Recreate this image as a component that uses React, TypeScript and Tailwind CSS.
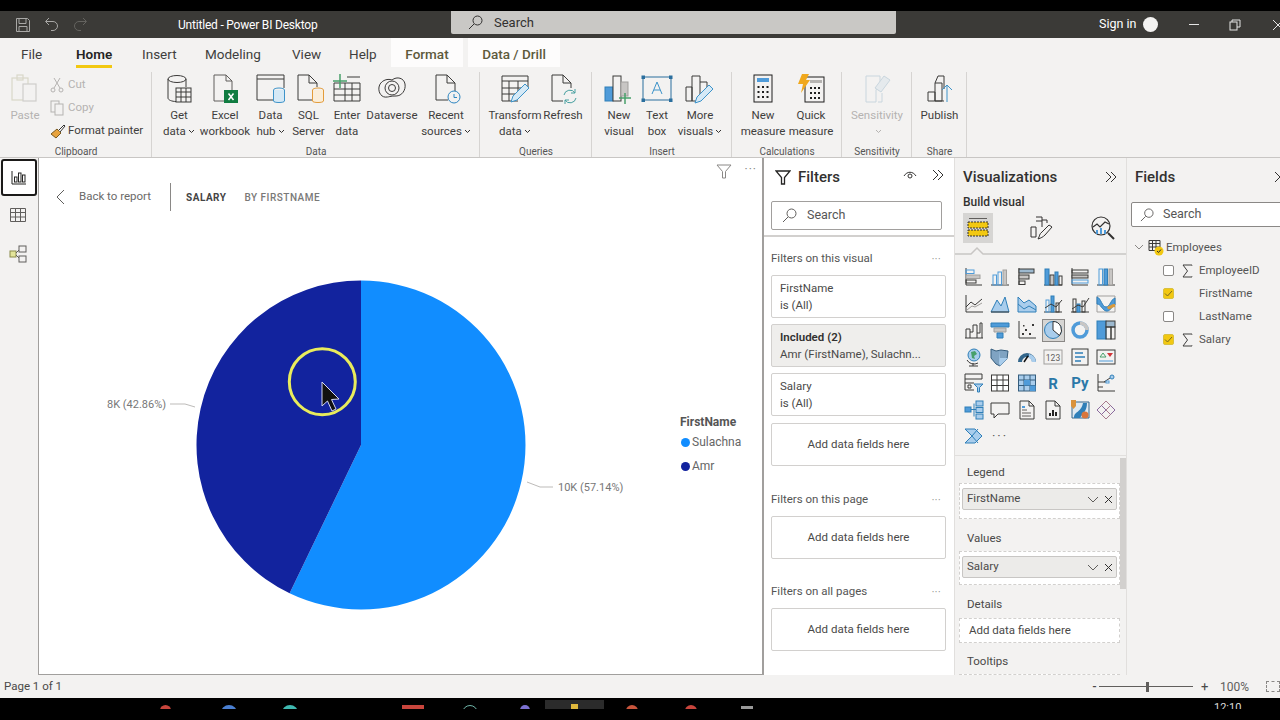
import React from 'react';

const D = '#3b3a39';
const B = '#4f9bd9';
const LB = '#a9cdec';
const G = '#a19f9d';

function Chev({ color = '#323130' }: { color?: string }) {
  return (
    <svg width="7" height="5" viewBox="0 0 7 5" className="inline-block ml-[2px] align-middle">
      <path d="M1 1l2.500 2.500L6 1" fill="none" stroke={color} strokeWidth="1" />
    </svg>
  );
}

function Rib({ children }: { children: React.ReactNode }) {
  return (
    <svg width="32" height="32" viewBox="0 0 32 32" fill="none" stroke={D} strokeWidth="1">
      {children}
    </svg>
  );
}

function RibbonButton({
  w,
  icon,
  line1,
  line2,
  chev,
  muted,
}: {
  w: number;
  icon: React.ReactNode;
  line1: string;
  line2?: string;
  chev?: boolean;
  muted?: boolean;
}) {
  return (
    <div className="flex flex-col items-center shrink-0" style={{ width: w }}>
      <div className="h-[39px] flex items-end pb-[2px] justify-center">{icon}</div>
      <div className={`text-[11.500px] leading-[16px] whitespace-nowrap ${muted ? 'text-[#b5b3b1]' : 'text-[#3f3e3d]'}`}>
        {line1}
      </div>
      <div className="text-[11.500px] leading-[16px] whitespace-nowrap text-[#3f3e3d] h-[16px]">
        {line2}
        {chev && <Chev color={muted ? '#b5b3b1' : '#323130'} />}
      </div>
    </div>
  );
}

function Group({
  w,
  label,
  children,
  pad = 0,
}: {
  w: number;
  label: string;
  children: React.ReactNode;
  pad?: number;
}) {
  return (
    <div className="relative flex flex-col h-full shrink-0" style={{ width: w }}>
      <div className="absolute right-0 top-[4px] bottom-0 w-px bg-[#d6d4d2]" />
      <div className="flex flex-1" style={{ paddingLeft: pad }}>
        {children}
      </div>
      <div className="text-[10px] leading-[10px] text-center text-[#555]">{label}</div>
    </div>
  );
}

function Ribbon() {
  return (
    <div className="h-[90px] bg-[#f3f2f1] flex border-b border-[#c8c6c4] shrink-0">
      <Group w={152} label="Clipboard">
        <div className="w-[50px] flex flex-col items-center">
          <div className="h-[39px] flex items-end pb-[2px]">
            <svg width="30" height="32" viewBox="0 0 30 32" fill="none" stroke="#d9d7c9" strokeWidth="1.200">
              <rect x="2" y="5" width="16" height="22" />
              <rect x="7" y="2" width="6" height="5" />
              <rect x="13" y="11" width="13" height="17" fill="#f3f2f1" stroke="#cfcdcb" />
            </svg>
          </div>
          <span className="text-[11.500px] leading-[16px] text-[#b5b3b1]">Paste</span>
        </div>
        <div className="flex flex-col pt-[7px] gap-[3px]">
          <div className="flex items-center gap-[4px] h-[20px] text-[11.500px] text-[#b5b3b1]">
            <svg width="14" height="16" viewBox="0 0 14 16" fill="none" stroke="#b5b3b1">
              <path d="M4 1l6 10M10 1L4 11" />
              <circle cx="3" cy="13" r="2" />
              <circle cx="11" cy="13" r="2" />
            </svg>
            <span>Cut</span>
          </div>
          <div className="flex items-center gap-[4px] h-[20px] text-[11.500px] text-[#b5b3b1]">
            <svg width="14" height="16" viewBox="0 0 14 16" fill="none" stroke="#b5b3b1">
              <rect x="1" y="1" width="8" height="11" />
              <rect x="5" y="4" width="8" height="11" fill="#f3f2f1" />
            </svg>
            <span>Copy</span>
          </div>
          <div className="flex items-center gap-[2px] h-[20px] text-[11.500px] text-[#3f3e3d] whitespace-nowrap">
            <svg width="16" height="16" viewBox="0 0 16 16" fill="none">
              <path d="M1 11l6-5 4 4-5 5z" fill="#e8a33d" stroke="#7a5a20" />
              <path d="M9 7l5-5 1 1-5 6" fill="#fff" stroke="#323130" />
            </svg>
            <span>Format painter</span>
          </div>
        </div>
      </Group>

      <Group w={328} label="Data" pad={8}>
        <RibbonButton
          w={38}
          line1="Get"
          line2="data"
          chev
          icon={
            <Rib>
              <ellipse cx="14" cy="6" rx="9" ry="3.500" />
              <path d="M5 6v19c0 2 4 3.500 8 3.500M23 6v8" />
              <rect x="13" y="15" width="15" height="14" fill="#f3f2f1" />
              <path d="M13 19h15M13 24h15M18 15v14M23 15v14" />
            </Rib>
          }
        />
        <RibbonButton
          w={54}
          line1="Excel"
          line2="workbook"
          icon={
            <Rib>
              <path d="M5 2h12l6 6v20H5z" stroke="#605e5c" />
              <path d="M17 2v6h6" stroke="#605e5c" />
              <rect x="15" y="17" width="14" height="13" fill="#107c41" stroke="none" />
              <path d="M19.500 20.500l5 6.500M24.500 20.500l-5 6.500" stroke="#fff" strokeWidth="1.500" />
            </Rib>
          }
        />
        <RibbonButton
          w={37}
          line1="Data"
          line2="hub"
          chev
          icon={
            <Rib>
              <path d="M20 27H2V2h27v13M2 6h27" />
              <ellipse cx="24" cy="17" rx="5.500" ry="2" stroke="#3d93c9" />
              <path d="M18.500 17v11c0 2 11 2 11 0V17" stroke="#3d93c9" fill="#d5e9f6" />
            </Rib>
          }
        />
        <RibbonButton
          w={39}
          line1="SQL"
          line2="Server"
          icon={
            <Rib>
              <path d="M19 27H5V2h11l8 8v4M16 2v8h8" />
              <ellipse cx="25" cy="17" rx="5.500" ry="2" stroke="#e39c3a" />
              <path d="M19.500 17v11c0 2 11 2 11 0V17" stroke="#e39c3a" fill="#fbeed9" />
            </Rib>
          }
        />
        <RibbonButton
          w={38}
          line1="Enter"
          line2="data"
          icon={
            <Rib>
              <path d="M3 10h26v18H3zM14 10v18M21 10v18M3 16h26M3 22h26M16 4h13" />
              <path d="M9 1v14M2 8h14" stroke="#48a06a" strokeWidth="1.500" />
            </Rib>
          }
        />
        <RibbonButton
          w={52}
          line1="Dataverse"
          icon={
            <Rib>
              <path d="M16 7c5-4 12-2 13 4s-3 12-9 12-7 1-9 1C6 25 2 20 3 14S11 5 16 7z" />
              <circle cx="16" cy="15" r="7" />
              <circle cx="16" cy="15" r="3.500" />
            </Rib>
          }
        />
        <RibbonButton
          w={56}
          line1="Recent"
          line2="sources"
          chev
          icon={
            <Rib>
              <path d="M18 27H6V2h11l8 8v8M17 2v8h8" />
              <circle cx="24" cy="24" r="6" stroke="#2e86c1" />
              <path d="M24 21v3.500h3" stroke="#2e86c1" />
            </Rib>
          }
        />
      </Group>

      <Group w={112} label="Queries" pad={8}>
        <RibbonButton
          w={54}
          line1="Transform"
          line2="data"
          chev
          icon={
            <Rib>
              <path d="M3 3h26v5H3zM3 8v20h16M29 8v6M10 8v20M19 8v12M3 15h20M3 21h13" />
              <path d="M12 29l2-6 12-12 4 4-12 12z" fill="#d5e9f6" stroke="#3d93c9" />
            </Rib>
          }
        />
        <RibbonButton
          w={42}
          line1="Refresh"
          icon={
            <Rib>
              <path d="M16 28H5V2h11l8 8v5M16 2v8h8" />
              <path d="M17 22a6 6 0 0 1 11-2M29 25a6 6 0 0 1-11 2" stroke="#48a0a0" />
              <path d="M28 16v4h-4M18 31v-4h4" stroke="#48a0a0" />
            </Rib>
          }
        />
      </Group>

      <Group w={140} label="Insert" pad={8}>
        <RibbonButton
          w={38}
          line1="New"
          line2="visual"
          icon={
            <Rib>
              <rect x="2" y="14" width="8" height="14" fill={B} stroke="#2f7fb8" />
              <rect x="10" y="3" width="8" height="25" fill="#f3f2f1" />
              <rect x="18" y="9" width="7" height="14" fill="#c8c6c4" stroke="#a19f9d" />
              <path d="M22 20v11M16 25h12" stroke="#48a06a" strokeWidth="1.500" />
            </Rib>
          }
        />
        <RibbonButton
          w={38}
          line1="Text"
          line2="box"
          icon={
            <svg width="32" height="32" viewBox="0 0 32 32" fill="none" stroke="#2b6f9e">
              <rect x="2" y="4" width="28" height="23" />
              <path d="M11 21l5-12 5 12M13 17h6" stroke="#3d93c9" />
              <g fill="#2b6f9e">
                <rect x="1" y="3" width="2.500" height="2.500" />
                <rect x="28.500" y="3" width="2.500" height="2.500" />
                <rect x="1" y="26" width="2.500" height="2.500" />
                <rect x="28.500" y="26" width="2.500" height="2.500" />
              </g>
            </svg>
          }
        />
        <RibbonButton
          w={48}
          line1="More"
          line2="visuals"
          chev
          icon={
            <Rib>
              <path d="M2 14h6v14H2zM8 3h8v25H8zM16 9h7v8" />
              <path d="M11 30l2-6 12-12 4 4-12 12z" fill="#d5e9f6" stroke="#3d93c9" />
            </Rib>
          }
        />
      </Group>

      <Group w={110} label="Calculations" pad={7}>
        <RibbonButton
          w={48}
          line1="New"
          line2="measure"
          icon={
            <Rib>
              <rect x="7" y="2" width="18" height="27" stroke="#1f1f1f" />
              <rect x="10" y="5" width="12" height="4" fill={B} stroke="none" />
              <path
                d="M10.500 13h2v2h-2zM15 13h2v2h-2zM19.500 13h2v2h-2zM10.500 18h2v2h-2zM15 18h2v2h-2zM19.500 18h2v2h-2zM10.500 23h2v2h-2zM15 23h2v2h-2zM19.500 23h2v2h-2z"
                fill="#1f1f1f"
                stroke="none"
              />
            </Rib>
          }
        />
        <RibbonButton
          w={48}
          line1="Quick"
          line2="measure"
          icon={
            <Rib>
              <rect x="10" y="4" width="19" height="25" stroke="#1f1f1f" />
              <rect x="15" y="7" width="12" height="3" fill="#b5b3b1" stroke="none" />
              <path
                d="M15 14h2v2h-2zM19 14h2v2h-2zM23 14h2v2h-2zM15 19h2v2h-2zM19 19h2v2h-2zM23 19h2v2h-2zM15 24h2v2h-2zM19 24h2v2h-2zM23 24h2v2h-2z"
                fill="#1f1f1f"
                stroke="none"
              />
              <path d="M7 1h7l-3 6h4L6 20l2-9H3z" fill="#f0a81c" stroke="none" />
            </Rib>
          }
        />
      </Group>

      <Group w={70} label="Sensitivity">
        <RibbonButton
          w={70}
          muted
          line1="Sensitivity"
          chev
          line2=""
          icon={
            <svg width="32" height="32" viewBox="0 0 32 32" fill="none" stroke="#c9d6de">
              <path d="M5 3h14v8l-4 6v12H5zM17 29h4V20" />
              <path d="M14 15l9-12 6 4-9 12z" fill="#e5eaed" />
            </svg>
          }
        />
      </Group>

      <Group w={55} label="Share">
        <RibbonButton
          w={55}
          line1="Publish"
          icon={
            <Rib>
              <path d="M4 19h7v9H4zM11 10h7v18h-7zM11 10l3-7h6v13" />
              <path d="M11 28h9" />
              <path d="M23 29V12M18 17l5-5 5 5" stroke="#3d93c9" />
            </Rib>
          }
        />
      </Group>
      <div className="flex-1" />
    </div>
  );
}

function TopBars() {
  return (
    <>
      <div className="h-[11px] bg-black shrink-0" />
      <div className="h-[27px] bg-[#3b3a37] flex items-center shrink-0 text-white whitespace-nowrap overflow-hidden">
        <svg width="16" height="16" viewBox="0 0 16 16" fill="none" stroke="#a9a8a6" className="ml-[15px] shrink-0">
          <path d="M1.500 1.500h11l2 2v11h-13z" />
          <path d="M4 1.500v5h7v-5M4 14.500v-5h8v5" />
        </svg>
        <svg width="15" height="15" viewBox="0 0 15 15" fill="none" stroke="#a9a8a6" className="ml-[13px] shrink-0">
          <path d="M5 1L1.500 4.500 5 8M2 4.500h7a4 4 0 0 1 0 9H7" />
        </svg>
        <svg width="15" height="15" viewBox="0 0 15 15" fill="none" stroke="#64635f" className="ml-[14px] shrink-0">
          <path d="M10 1l3.500 3.500L10 8M13 4.500H6a4 4 0 0 0 0 9h2" />
        </svg>
        <span className="ml-[90px] w-[273px] shrink-0 text-[12px] tracking-[-0.2px]">Untitled - Power BI Desktop</span>
        <div className="w-[445px] h-[23px] shrink-0 self-start bg-[#c9c8c5] rounded-b-[2px] flex items-center text-[#323130] text-[13px]">
          <svg width="15" height="15" viewBox="0 0 15 15" fill="none" stroke="#323130" className="ml-[17px]">
            <circle cx="9.500" cy="5.500" r="4.500" />
            <path d="M6 9l-5 5" />
          </svg>
          <span className="ml-[11px]">Search</span>
        </div>
        <span className="ml-[203px] w-[35px] shrink-0 text-[12.500px]">Sign in</span>
        <div className="ml-[9px] w-[15px] h-[15px] shrink-0 rounded-full bg-[#f3f2f1]" />
        <div className="ml-[31px] w-[10px] h-[1.500px] shrink-0 bg-[#e5e5e5]" />
        <svg width="12" height="12" viewBox="0 0 12 12" fill="none" stroke="#e5e5e5" className="ml-[30px] shrink-0">
          <rect x="1" y="3" width="7" height="8" />
          <path d="M3 3V1h8v7H8" />
        </svg>
        <svg width="12" height="12" viewBox="0 0 12 12" fill="none" stroke="#e5e5e5" className="ml-[31px] shrink-0">
          <path d="M1 1l10 10M11 1L1 11" />
        </svg>
      </div>
      <div className="h-[30px] bg-[#f3f2f1] flex shrink-0 text-[13.500px] text-[#3f3e3d] whitespace-nowrap">
        <span className="ml-[21px] w-[20px] leading-[32px]">File</span>
        <div className="ml-[35px] w-[36px] h-full border-b-[3px] border-[#f2c811] font-semibold text-[#252423] leading-[32px] text-center">Home</div>
        <span className="ml-[30px] w-[33px] leading-[32px]">Insert</span>
        <span className="ml-[30px] w-[56px] leading-[32px]">Modeling</span>
        <span className="ml-[31px] w-[27px] leading-[32px]">View</span>
        <span className="ml-[30px] w-[27px] leading-[32px]">Help</span>
        <div className="ml-[15px] w-[72px] h-[29px] bg-white/80 text-center leading-[32px] font-medium text-[#5e5a3c]">Format</div>
        <div className="ml-[5px] w-[92px] h-[29px] bg-white/80 text-center leading-[32px] font-medium text-[#5e5a3c]">Data / Drill</div>
      </div>
    </>
  );
}

function LeftRail() {
  return (
    <div className="w-[39px] shrink-0 bg-[#f3f2f1] border-r border-[#a19f9d] flex flex-col items-center">
      <div className="mt-[1px] ml-[-1px] w-[36px] h-[37px] bg-white border-2 border-[#1b1a19] rounded-[3px] flex items-center justify-center">
        <svg width="15" height="14" viewBox="0 0 15 14" fill="none" stroke="#252423">
          <path d="M1 0v13h14" />
          <rect x="3.500" y="6" width="2.500" height="5" />
          <rect x="7.500" y="2" width="2.500" height="9" />
          <rect x="11.500" y="4" width="2.500" height="7" />
        </svg>
      </div>
      <svg width="16" height="14" viewBox="0 0 16 14" fill="none" stroke="#605e5c" className="mt-[12px] -ml-[2px]">
        <path d="M.5.500h15v13H.500zM.5 4.500h15M.5 9h15M5.500.5v13M10.500.5v13" />
      </svg>
      <svg width="18" height="18" viewBox="0 0 18 18" fill="none" stroke="#605e5c" className="mt-[23px] -ml-[2px]">
        <rect x="1" y="6" width="6" height="6" fill="#e3e59a" stroke="#8a8a4a" />
        <rect x="10" y="1" width="7" height="6" />
        <rect x="10" y="11" width="7" height="6" />
        <path d="M7 8l3-3M7 10l3 3" />
      </svg>
    </div>
  );
}

function Chart() {
  return (
    <svg width="620" height="420" viewBox="0 0 620 420" className="shrink-0">
      <path d="M322 225 L322 60.500 A164.500 164.500 0 1 1 250.600 373.200 Z" fill="#118dff" />
      <path d="M322 225 L250.600 373.200 A164.500 164.500 0 0 1 322 60.500 Z" fill="#12239e" />
      <path d="M131 184h15l10 3" fill="none" stroke="#bdbbb9" />
      <path d="M488 262l13 5h13" fill="none" stroke="#bdbbb9" />
      <text x="68" y="188" fontSize="11" fill="#777">8K (42.86%)</text>
      <text x="519" y="271" fontSize="11" fill="#777">10K (57.14%)</text>
      <circle cx="283.300" cy="161.700" r="33" fill="none" stroke="#e9ec5c" strokeWidth="3" />
      <path d="M283 162V186l5.500-5 4.500 10 4-2-4.500-9.500 7.500-.5z" fill="#111" stroke="#d5d8f0" strokeWidth="1" />
    </svg>
  );
}

function Canvas() {
  return (
    <div className="w-[723px] shrink-0 bg-white flex flex-col border-b border-[#a19f9d]">
      <div className="h-[22px] flex justify-end items-center pr-[5px] shrink-0 mt-[2px]">
        <svg width="16" height="15" viewBox="0 0 16 15" fill="none" stroke="#8a8886">
          <path d="M1 1h14L9.500 7.500V14h-3V7.500z" />
        </svg>
        <div className="ml-[13px] mb-[4px] text-[#8a8886] text-[12px] leading-none tracking-[1px]">···</div>
      </div>
      <div className="h-[32px] flex items-center shrink-0 -mt-[1px]">
        <svg width="10" height="16" viewBox="0 0 10 16" fill="none" stroke="#605e5c" className="ml-[16px]">
          <path d="M9 1L2 8l7 7" />
        </svg>
        <span className="ml-[14px] text-[11.500px] text-[#6b6a69] w-[91px]">Back to report</span>
        <div className="w-px h-[28px] bg-[#8a8886]" />
        <span className="ml-[15px] text-[10px] font-bold tracking-[0.5px] text-[#444]">SALARY</span>
        <span className="ml-[18px] text-[10px] font-medium tracking-[0.5px] text-[#7a7978]">BY FIRSTNAME</span>
      </div>
      <div className="flex mt-[7px]">
        <Chart />
        <div className="ml-[21px] mt-[194px] flex flex-col">
          <span className="text-[12px] leading-[16px] font-bold text-[#555]">FirstName</span>
          <div className="flex items-center mt-[4px] h-[16px] text-[12px] text-[#666]">
            <span className="w-[9px] h-[9px] rounded-full bg-[#118dff] ml-[1px] mr-[2px]" />
            Sulachna
          </div>
          <div className="flex items-center mt-[8px] h-[16px] text-[12px] text-[#666]">
            <span className="w-[9px] h-[9px] rounded-full bg-[#12239e] ml-[1px] mr-[2px]" />
            Amr
          </div>
        </div>
      </div>
    </div>
  );
}

function SearchBox({ w, textLeft = 10 }: { w: number; textLeft?: number }) {
  return (
    <div
      className="h-[29px] bg-white border border-[#a19f9d] rounded-[2px] flex items-center text-[12.500px] text-[#555] shrink-0"
      style={{ width: w }}
    >
      <svg width="15" height="15" viewBox="0 0 15 15" fill="none" stroke="#605e5c" className="ml-[10px]">
        <circle cx="9.500" cy="5.500" r="4.500" />
        <path d="M6 9l-5 5" />
      </svg>
      <span style={{ marginLeft: textLeft }}>Search</span>
    </div>
  );
}

function FilterCard({ title, sub, active }: { title?: string; sub?: string; active?: boolean }) {
  return (
    <div
      className={`w-[175px] h-[43px] border border-[#d2d0ce] rounded-[2px] text-[11.500px] leading-[17px] text-[#4a4948] flex flex-col justify-center pl-[8px] shrink-0 ${
        active ? 'bg-[#efeeec]' : 'bg-white'
      }`}
    >
      <span className={active ? 'font-semibold text-[#323130]' : ''}>{title}</span>
      <span>{sub}</span>
    </div>
  );
}

function AddCard() {
  return (
    <div className="w-[175px] h-[43px] bg-white border border-[#d2d0ce] rounded-[2px] text-[11.500px] text-[#4a4948] flex items-center justify-center shrink-0">
      Add data fields here
    </div>
  );
}

function SectionHead({ label, mt }: { label: string; mt: number }) {
  return (
    <div className="flex items-center justify-between w-[173px] h-[16px] text-[11.500px] text-[#555]" style={{ marginTop: mt }}>
      <span>{label}</span>
      <span className="text-[#8a8886] text-[10px] tracking-[0.5px] pr-[3px]">···</span>
    </div>
  );
}

function FiltersPane() {
  return (
    <div className="w-[193px] shrink-0 bg-white border-l-2 border-[#a19f9d] border-r border-r-[#e1dfdd] flex flex-col overflow-hidden">
      <div className="h-[34px] flex items-center pl-[11px] shrink-0 mt-[2px]">
        <svg width="16" height="15" viewBox="0 0 16 15" fill="none" stroke="#252423" strokeWidth="1.300">
          <path d="M1 1h14L9.500 7.500V14h-3V7.500z" />
        </svg>
        <span className="ml-[7px] w-[40px] text-[15px] font-medium text-[#323130] whitespace-nowrap">Filters</span>
        <svg width="14" height="10" viewBox="0 0 14 10" fill="none" stroke="#323130" className="ml-[65px] -mt-[4px]">
          <path d="M1 6c3-5 9-5 12 0" />
          <circle cx="7" cy="6" r="2" />
        </svg>
        <svg width="12" height="12" viewBox="0 0 12 12" fill="none" stroke="#323130" className="ml-[15px] -mt-[4px]">
          <path d="M1 1l5 5-5 5M6 1l5 5-5 5" />
        </svg>
      </div>
      <div className="pl-[7px]">
        <div className="mt-[7px]">
          <SearchBox w={171} textLeft={10} />
        </div>
      </div>
      <div className="h-[2px] bg-[#d2d0ce] mt-[5px] shrink-0" />
      <div className="pl-[7px] flex flex-col">
        <SectionHead label="Filters on this visual" mt={14} />
        <div className="flex flex-col mt-[8px]">
          <FilterCard title="FirstName" sub="is (All)" />
          <div className="mt-[6px]">
            <FilterCard title="Included (2)" sub="Amr (FirstName), Sulachn..." active />
          </div>
          <div className="mt-[6px]">
            <FilterCard title="Salary" sub="is (All)" />
          </div>
          <div className="mt-[7px]">
            <AddCard />
          </div>
        </div>
        <SectionHead label="Filters on this page" mt={26} />
        <div className="mt-[8px]">
          <AddCard />
        </div>
        <SectionHead label="Filters on all pages" mt={25} />
        <div className="mt-[8px]">
          <AddCard />
        </div>
      </div>
    </div>
  );
}

function V({ children }: { children: React.ReactNode }) {
  return (
    <svg width="20" height="20" viewBox="0 0 20 20" fill="none" stroke={D} strokeWidth="1">
      {children}
    </svg>
  );
}

const vizIcons: React.ReactNode[] = [
  <V key="0"><path d="M2 1v17h16" /><rect x="2" y="3" width="8" height="3.500" stroke={B} /><rect x="2" y="8" width="14" height="3.500" fill="#c8c6c4" stroke={G} /><rect x="2" y="13" width="10" height="3" /></V>,
  <V key="1"><path d="M1 18h18" /><rect x="3" y="8" width="3.500" height="10" stroke={B} /><rect x="8" y="5" width="3.500" height="13" stroke={B} /><rect x="13" y="3" width="3.500" height="15" fill="#c8c6c4" stroke={G} /></V>,
  <V key="2"><path d="M2 1v17" /><rect x="2" y="2" width="15" height="4" fill="#9db9cf" stroke={D} /><rect x="2" y="8" width="10" height="4" fill="#c8c6c4" stroke={D} /><rect x="2" y="14" width="6" height="3.500" /></V>,
  <V key="3"><path d="M1 18h18" /><rect x="2" y="2" width="4" height="16" fill={B} stroke="#2f7fb8" /><rect x="7" y="8" width="4" height="10" fill="#c8c6c4" /><rect x="12" y="5" width="3" height="13" fill={B} stroke="#2f7fb8" /><rect x="16" y="9" width="3" height="9" /></V>,
  <V key="4"><path d="M2 1v17h16" /><rect x="2" y="3" width="16" height="3" /><rect x="2" y="8" width="16" height="3" fill="#c8c6c4" /><rect x="2" y="13" width="16" height="3" stroke={B} /></V>,
  <V key="5"><path d="M1 18h18" /><rect x="3" y="2" width="3.500" height="16" stroke={B} /><rect x="8" y="2" width="3.500" height="16" fill={B} stroke="#2f7fb8" /><rect x="13" y="2" width="3.500" height="16" fill="#c8c6c4" stroke={G} /></V>,

  <V key="6"><path d="M2 1v17h17" /><path d="M2 13l5-5 4 3 7-6" /><path d="M3 16l5-4 3 1 7-4" stroke={G} /></V>,
  <V key="7"><path d="M1 18l6-12 4 6 4-9 4 15z" fill={LB} stroke="#2f7fb8" /><path d="M1 18h18" /></V>,
  <V key="8"><path d="M1 3l6 6 5-3 7 6v6H1z" fill={LB} stroke="#2f7fb8" /><path d="M1 10l6 5 5-3 7 4" stroke="#2f7fb8" /></V>,
  <V key="9"><path d="M1 18h18" /><rect x="3" y="6" width="3" height="12" stroke={B} /><rect x="8" y="2" width="3" height="16" fill={B} stroke="#2f7fb8" /><rect x="13" y="9" width="3" height="9" /><path d="M2 14l6-4 5 3 6-7" /></V>,
  <V key="10"><path d="M1 18h18" /><rect x="3" y="5" width="3" height="13" /><rect x="7" y="10" width="3" height="8" fill={B} stroke="#2f7fb8" /><rect x="12" y="7" width="3" height="11" /><path d="M2 15l6-4 5 2 6-9" /></V>,
  <V key="11"><path d="M1 2h18v16H1z" stroke={G} /><path d="M1 3c4 1 5 10 9 10s5-8 9-9v7c-3 1-5 7-9 6s-5-7-9-7z" fill={B} stroke="#2f7fb8" /><path d="M11 13c3-1 4-3 8-3v3c-3 0-4 3-7 2z" fill="#d99a3c" stroke="none" /></V>,

  <V key="12"><path d="M1 18h18" /><path d="M2 18V9h4v3h3V5h4v8h3V3h2v15" /><path d="M6 12v6M13 13v5" /></V>,
  <V key="13"><path d="M1 3h18v4H1z" fill={B} stroke="#2f7fb8" /><path d="M4 8h12v4H4z" fill="#c8c6c4" stroke={G} /><path d="M7 13h6v5H7z" fill={B} stroke="#2f7fb8" /></V>,
  <V key="14"><path d="M2 1v17h17" /><g fill={D} stroke="none"><rect x="5" y="13" width="2" height="2" /><rect x="8" y="9" width="2" height="2" /><rect x="12" y="13" width="2" height="2" /><rect x="15" y="4" width="2" height="2" /><rect x="6" y="5" width="1.500" height="1.500" /></g></V>,
  <V key="15"><circle cx="10" cy="10" r="8.500" stroke="#2f7fb8" fill={LB} /><path d="M10 10V1.500A8.500 8.500 0 0 1 16.500 15.500Z" fill="#fff" stroke="#323130" /></V>,
  <V key="16"><circle cx="10" cy="10" r="7" stroke={B} strokeWidth="3.500" /><path d="M10 3a7 7 0 0 1 7 7" stroke="#c8c6c4" strokeWidth="3.500" /></V>,
  <V key="17"><rect x="1" y="1" width="9" height="18" fill={B} stroke="#2f7fb8" /><rect x="10" y="1" width="9" height="6" fill="#9db9cf" /><rect x="10" y="7" width="5" height="12" /><rect x="15" y="7" width="4" height="12" /></V>,

  <V key="18"><circle cx="10" cy="8" r="6" fill={LB} stroke="#2f7fb8" /><path d="M7 5l4-1 2 3-3 2 1 3-3-1z" fill="#48a06a" stroke="none" /><path d="M3 13a8 8 0 0 0 11 3M9 16v3M5 19h9" /></V>,
  <V key="19"><path d="M1 2l5 2 5-1 7 1-1 8-7 7-4-2-5-6z" fill="#7fa3c2" stroke="#355d7d" /><path d="M10 3v8l8 0-1 1-7 7-1-3z" fill={LB} stroke="none" /></V>,
  <V key="20"><path d="M1 15a9 9 0 0 1 18 0h-4a5 5 0 0 0-10 0z" fill="#34678c" stroke="none" /><path d="M7 15l4-6" stroke="#111" strokeWidth="1.500" /><path d="M12 7a9 9 0 0 1 7 8h-4a5 5 0 0 0-3-4z" fill={LB} stroke="none" /></V>,
  <V key="21"><rect x="1" y="3" width="18" height="14" stroke={G} /><text x="10" y="13.500" fontSize="8.500" textAnchor="middle" fill="#605e5c" stroke="none">123</text></V>,
  <V key="22"><rect x="2" y="2" width="16" height="16" /><path d="M5 6h8M5 10h10M5 14h6" stroke="#2f7fb8" strokeWidth="1.500" /></V>,
  <V key="23"><rect x="1" y="3" width="18" height="14" /><path d="M4 10l3-4 3 4z" stroke="#48a06a" /><path d="M11 6h6l-3 4z" fill="#d13438" stroke="none" /><path d="M3 14h14" stroke={B} /></V>,

  <V key="24"><path d="M1 1h17v5H1zM1 6v11h9M1 10h9" /><path d="M4 12h3v3H4z" /><path d="M10 11h9l-3.500 3.500V19h-2v-4.500z" fill={LB} stroke="#2f7fb8" /></V>,
  <V key="25"><rect x="1.500" y="2" width="17" height="16" fill="#fff" /><path d="M1.500 7h17M1.500 12.500h17M7 2v16M13 2v16" /></V>,
  <V key="26"><rect x="1.500" y="2" width="17" height="16" fill={LB} stroke="#355d7d" /><path d="M1.500 7h17M1.500 12.500h17M7 2v16M13 2v16" stroke="#355d7d" /><rect x="7" y="7" width="6" height="5.500" fill={B} stroke="none" /><rect x="13" y="12.500" width="5.500" height="5.500" fill={B} stroke="none" /></V>,
  <V key="27"><text x="10" y="16" fontSize="15" fontWeight="700" textAnchor="middle" fill="#2b78a8" stroke="none">R</text></V>,
  <V key="28"><text x="10" y="15" fontSize="15" fontWeight="700" textAnchor="middle" fill="#2b78a8" stroke="none">Py</text></V>,
  <V key="29"><path d="M2 1v17h17M2 9h8M2 14h5" /><circle cx="16" cy="4" r="2" stroke="#2f7fb8" fill={LB} /><path d="M8 9l6-4" /><rect x="10" y="8" width="3" height="2" stroke={B} /></V>,

  <V key="30"><rect x="1" y="7" width="6" height="5" fill={B} stroke="#2f7fb8" /><rect x="12" y="1" width="7" height="5" fill={LB} stroke="#2f7fb8" /><rect x="12" y="7.500" width="7" height="5" fill={LB} stroke="#2f7fb8" /><rect x="12" y="14" width="7" height="5" fill={LB} stroke="#2f7fb8" /><path d="M7 9.500h5M10 3.500v13" stroke="#2f7fb8" /></V>,
  <V key="31"><path d="M1 3h18v11H8l-4 4v-4H1z" /></V>,
  <V key="32"><path d="M3 1h9l5 5v13H3z" /><path d="M12 1v5h5" /><path d="M5 10h5M5 13h9M5 16h9" stroke="#605e5c" /><rect x="5" y="6" width="3" height="2" fill={B} stroke="none" /></V>,
  <V key="33"><path d="M3 1h9l5 5v13H3z" /><path d="M12 1v5h5" /><path d="M7 16v-3M10 16v-6M13 16v-4" strokeWidth="2" stroke="#252423" /></V>,
  <V key="34"><path d="M2 2h17v16H2z" stroke="#34678c" fill="#dfe9f1" /><path d="M4 18c0-7 7-5 9-15h4c0 8-4 10-7 15z" fill="#2f7fb8" stroke="none" /><path d="M1 0h5v6l-2.500 3L1 6z" fill="#d9923c" stroke="none" /><circle cx="15" cy="15" r="3.500" fill="#d9763c" stroke="none" /></V>,
  <V key="35"><path d="M10 1l9 9-9 9-9-9z" stroke="#8a6a9e" /><path d="M10 1l4.500 4.500L10 10 5.500 5.500z M5.500 14.500L10 10l4.500 4.500L10 19z" fill="none" stroke="#a87a8e" /><path d="M5.500 5.500L10 10l-4.500 4.500" stroke="#8a6a9e" /></V>,

  <V key="36"><path d="M1 3h10l7 7-7 7H1l7-7z" fill={LB} stroke="#2f7fb8" /><path d="M8 10l6-7M8 10l6 7" stroke="#2f7fb8" /></V>,
  <div key="37" className="text-[13px] leading-[20px] tracking-[2px] text-[#605e5c] text-center">···</div>,
];

function Well({ chip, h, mt }: { chip: string; h: number; mt: number }) {
  return (
    <div
      className="ml-[4px] w-[161px] bg-white border border-dashed border-[#d2d0ce] flex items-start pt-[4px] px-[2px]"
      style={{ height: h, marginTop: mt }}
    >
      <div className="w-[155px] h-[22px] bg-[#ecebe9] border border-[#c8c6c4] rounded-[2px] flex items-center pl-[4px] text-[11.500px] text-[#4a4948]">
        <span className="flex-1">{chip}</span>
        <svg width="12" height="7" viewBox="0 0 12 7" fill="none" stroke="#605e5c">
          <path d="M1 1l5 5 5-5" />
        </svg>
        <svg width="9" height="9" viewBox="0 0 9 9" fill="none" stroke="#323130" className="ml-[5px] mr-[3px]">
          <path d="M1 1l7 7M8 1L1 8" />
        </svg>
      </div>
    </div>
  );
}

function VizPane() {
  return (
    <div className="w-[172px] shrink-0 bg-[#f3f2f1] border-r border-[#e1dfdd] flex flex-col overflow-hidden">
      <div className="h-[34px] flex items-center pl-[8px] pr-[9px] justify-between shrink-0 mt-[2px]">
        <span className="text-[15px] font-medium text-[#323130]">Visualizations</span>
        <svg width="12" height="12" viewBox="0 0 12 12" fill="none" stroke="#323130">
          <path d="M1 1l5 5-5 5M6 1l5 5-5 5" />
        </svg>
      </div>
      <div className="pl-[8px] text-[12px] leading-[16px] text-[#323130] font-medium">Build visual</div>
      <div className="flex items-center h-[30px] ml-[8px] mt-[3px] shrink-0">
        <div className="w-[30px] h-[30px] bg-[#d6d5d3] flex items-center justify-center">
          <svg width="24" height="24" viewBox="0 0 24 24" fill="none" stroke="#323130">
            <path d="M3 2.500h18" stroke="#605e5c" />
            <rect x="2" y="6" width="20" height="6" fill="#f2c811" strokeDasharray="2 1" />
            <rect x="2" y="14" width="20" height="6" fill="#f2c811" strokeDasharray="2 1" />
          </svg>
        </div>
        <svg width="26" height="26" viewBox="0 0 26 26" fill="none" stroke="#323130" className="ml-[35px]">
          <path d="M3 12h5v10H3zM8 6h6v6M8 2h6M14 6V2M19 8V5h-5" />
          <path d="M10 24c2-3 1-5 4-7l7-7 3 2-7 8c-2 2-4 3-7 4z" fill="#f3f2f1" />
        </svg>
        <svg width="26" height="26" viewBox="0 0 26 26" fill="none" stroke="#323130" strokeWidth="1.200" className="ml-[36px]">
          <circle cx="11" cy="11" r="9" />
          <path d="M3 12l4-3 3 3 5-5 4 2" />
          <path d="M7 19v-4M11 19v-6M15 19v-4" stroke={B} strokeWidth="2" />
          <path d="M18 18l6 6" strokeWidth="2" />
        </svg>
      </div>
      <svg width="172" height="10" viewBox="0 0 172 10" className="shrink-0 mt-[2px]">
        <path d="M0 9h16l6-6 6 6h144" fill="none" stroke="#c8c6c4" strokeWidth="1.500" />
      </svg>
      <div className="grid grid-cols-[repeat(6,26.5px)] auto-rows-[26.5px] pl-[7px] pt-[10.500px] h-[200px] shrink-0">
        {vizIcons.map((ic, i) => (
          <div key={i} className={`flex items-center justify-center w-[23px] h-[23px] ${i === 15 ? 'bg-[#d6d5d3] border border-[#8a8886]' : ''}`}>
            {ic}
          </div>
        ))}
      </div>
      <div className="h-px bg-[#e1dfdd] shrink-0" />
      <div className="relative flex-1 overflow-hidden">
        <div className="absolute right-0 top-[2px] w-[6px] h-[131px] bg-[#d2d0ce]" />
        <div className="text-[11.500px] text-[#4a4948] flex flex-col">
          <span className="ml-[12px] mt-[8px] leading-[16px]">Legend</span>
          <Well chip="FirstName" h={36} mt={3} />
          <span className="ml-[12px] mt-[11px] leading-[16px]">Values</span>
          <Well chip="Salary" h={34} mt={5} />
          <span className="ml-[12px] mt-[11px] leading-[16px]">Details</span>
          <div className="ml-[4px] mt-[6px] w-[161px] h-[25px] bg-white border border-dashed border-[#d2d0ce] flex items-center pl-[9px] shrink-0">
            Add data fields here
          </div>
          <span className="ml-[12px] mt-[10px] leading-[16px]">Tooltips</span>
          <div className="ml-[4px] mt-[5px] w-[161px] h-[25px] bg-white border border-dashed border-[#d2d0ce] shrink-0" />
        </div>
      </div>
    </div>
  );
}

function Check({ on }: { on?: boolean }) {
  return (
    <div className={`w-[11px] h-[11px] rounded-[2px] border flex items-center justify-center ${on ? 'bg-[#f2c811] border-[#d8c040]' : 'bg-white border-[#8a8886]'}`}>
      {on && (
        <svg width="9" height="9" viewBox="0 0 9 9" fill="none" stroke="#7a6a20">
          <path d="M1 4.500l2.500 2.500L8 2" />
        </svg>
      )}
    </div>
  );
}

function FieldRow({ label, on, sigma }: { label: string; on?: boolean; sigma?: boolean }) {
  return (
    <div className="flex items-center h-[23px] ml-[36px] text-[11.500px] text-[#555]">
      <Check on={on} />
      <div className="w-[11px] ml-[8px] mr-[6px] h-[14px]">
        {sigma && (
          <svg width="11" height="14" viewBox="0 0 11 14" fill="none" stroke="#3f3e3d">
            <path d="M10 1.500V1H1l4.500 6L1 13h9v-.500" />
          </svg>
        )}
      </div>
      <span>{label}</span>
    </div>
  );
}

function FieldsPane() {
  return (
    <div className="flex-1 bg-[#f3f2f1] flex flex-col overflow-hidden">
      <div className="h-[34px] flex items-center justify-between shrink-0 mt-[2px] pl-[8px]">
        <span className="text-[15px] font-medium text-[#323130]">Fields</span>
        <svg width="6" height="12" viewBox="0 0 6 12" fill="none" stroke="#323130">
          <path d="M1 1l5 5-5 5" />
        </svg>
      </div>
      <div className="ml-[4px] mt-[8px] w-[160px] overflow-hidden shrink-0">
        <div className="h-[25px] w-[160px] bg-white border border-[#8a8886] rounded-[2px] flex items-center text-[12.500px] text-[#555]">
          <svg width="14" height="14" viewBox="0 0 15 15" fill="none" stroke="#605e5c" className="ml-[8px]">
            <circle cx="9.500" cy="5.500" r="4.500" />
            <path d="M6 9l-5 5" />
          </svg>
          <span className="ml-[9px]">Search</span>
        </div>
      </div>
      <div className="flex items-center h-[23px] mt-[9px] ml-[7px] text-[11.500px] text-[#555]">
        <svg width="10" height="7" viewBox="0 0 10 7" fill="none" stroke="#8a8886">
          <path d="M1 1l4 4 4-4" />
        </svg>
        <svg width="18" height="18" viewBox="0 0 18 18" fill="none" stroke="#3b3a39" className="ml-[4px]">
          <path d="M1 1.500h11v10H1zM1 4.500h11M1 8h11M4.500 1.500v10M8 1.500v10" />
          <circle cx="11" cy="12" r="4.500" fill="#f2c811" stroke="none" />
          <path d="M9 12l1.500 1.500L13 10.500" stroke="#323130" />
        </svg>
        <span>Employees</span>
      </div>
      <FieldRow label="EmployeeID" sigma />
      <FieldRow label="FirstName" on />
      <FieldRow label="LastName" />
      <FieldRow label="Salary" on sigma />
    </div>
  );
}

function StatusBar() {
  return (
    <div className="h-[23px] bg-[#f3f2f1] flex items-center shrink-0 text-[11.500px] text-[#4a4948] whitespace-nowrap">
      <span className="ml-[4px] w-[1090px]">Page 1 of 1</span>
      <span className="w-[7px] font-bold">-</span>
      <div className="w-[94px] h-px bg-[#605e5c] flex items-center">
        <div className="ml-[47px] w-[3px] h-[10px] bg-[#605e5c]" />
      </div>
      <span className="ml-[8px] w-[19px] text-[13px]">+</span>
      <span className="w-[46px] text-[#605e5c] text-[12px]">100%</span>
      <div className="w-[14px] h-[11px] border border-[#8a8886] border-dashed shrink-0" />
    </div>
  );
}

function TaskBar() {
  return (
    <div className="flex-1 bg-black flex flex-col">
      <div className="h-[11px] flex overflow-hidden items-start">
        <span className="mt-[7px] ml-[160px] w-[11px] h-[11px] rounded-full bg-[#c8453c] shrink-0" />
        <span className="mt-[7px] ml-[50px] w-[16px] h-[16px] rounded-full bg-[#4a7fd1] shrink-0" />
        <span className="mt-[7px] ml-[45px] w-[16px] h-[16px] rounded-full bg-[#3fb8b0] shrink-0" />
        <span className="mt-[7px] ml-[104px] w-[22px] h-[11px] bg-[#c8453c] shrink-0" />
        <span className="mt-[7px] ml-[38px] w-[16px] h-[16px] rounded-full border border-[#6fb5a8] shrink-0" />
        <span className="mt-[7px] ml-[42px] w-[10px] h-[10px] rounded-full bg-[#7a6fd0] shrink-0" />
        <div className="ml-[15px] w-[59px] h-[11px] mt-[2px] bg-[#2b2b2b] shrink-0 flex justify-center">
          <span className="w-[7px] h-[8px] mt-[4px] bg-[#e0b83c]" />
        </div>
        <span className="mt-[7px] ml-[22px] w-[12px] h-[12px] rounded-full bg-[#c8553c] shrink-0" />
        <span className="mt-[7px] ml-[47px] w-[12px] h-[12px] rounded-full bg-[#c8453c] shrink-0" />
        <span className="mt-[8px] ml-[44px] w-[12px] h-[10px] bg-[#999] shrink-0" />
        <span className="mt-[3px] ml-[461px] text-[11px] leading-[14px] text-[#ddd] shrink-0">12:10</span>
      </div>
    </div>
  );
}

export default function App() {
  return (
    <div className="w-[1280px] h-[720px] overflow-hidden flex flex-col font-[Roboto,sans-serif] bg-black">
      <TopBars />
      <Ribbon />
      <div className="flex flex-1 min-h-0 bg-[#f3f2f1]">
        <LeftRail />
        <Canvas />
        <FiltersPane />
        <VizPane />
        <FieldsPane />
      </div>
      <StatusBar />
      <div className="h-[22px] shrink-0 flex flex-col">
        <TaskBar />
      </div>
    </div>
  );
}
